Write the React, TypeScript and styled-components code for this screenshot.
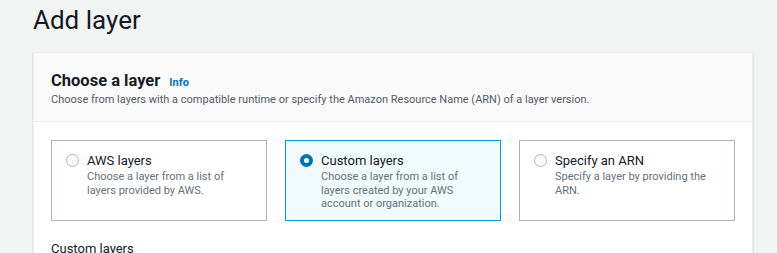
import React, { useState } from 'react'
import styled, { createGlobalStyle } from 'styled-components'

const GlobalStyle = createGlobalStyle`
  html, body {
    margin: 0;
    padding: 0;
    background: #f2f3f3;
    font-family: Roboto, "Liberation Sans", sans-serif;
    color: #16191f;
  }
`

type Option = {
  id: string
  title: string
  description: string
}

const options: Option[] = [
  {
    id: 'aws',
    title: 'AWS layers',
    description: 'Choose a layer from a list of layers provided by AWS.'
  },
  {
    id: 'custom',
    title: 'Custom layers',
    description: 'Choose a layer from a list of layers created by your AWS account or organization.'
  },
  {
    id: 'arn',
    title: 'Specify an ARN',
    description: 'Specify a layer by providing the ARN.'
  }
]

const App: React.FC = () => {
  const [selected, setSelected] = useState('custom')

  return (
    <Page>
      <GlobalStyle />
      <PageTitle>Add layer</PageTitle>
      <Panel>
        <PanelHeader>
          <HeaderRow>
            <PanelTitle>Choose a layer</PanelTitle>
            <InfoLink>Info</InfoLink>
          </HeaderRow>
          <HeaderDescription>
            Choose from layers with a compatible runtime or specify the Amazon Resource Name (ARN) of a layer
            version.
          </HeaderDescription>
        </PanelHeader>
        <PanelBody>
          <Tiles>
            {options.map((o) => (
              <Tile key={o.id} $active={selected === o.id} onClick={() => setSelected(o.id)}>
                <Radio $active={selected === o.id} />
                <TileText>
                  <TileTitle>{o.title}</TileTitle>
                  <TileDescription>{o.description}</TileDescription>
                </TileText>
              </Tile>
            ))}
          </Tiles>
          <FieldLabel>Custom layers</FieldLabel>
        </PanelBody>
      </Panel>
    </Page>
  )
}

const Page = styled.div`
  padding: 0 24px 0 33px;
  height: 253px;
  overflow: hidden;
`

const PageTitle = styled.h1`
  margin: 0;
  padding-top: 2px;
  height: 50px;
  font-size: 26px;
  font-weight: 400;
  line-height: 36px;
  color: #16191f;
`

const Panel = styled.div`
  width: 720px;
  box-sizing: border-box;
  background: #fff;
  border: 1px solid #eaeded;
  border-bottom: none;
  box-shadow: 0 1px 1px 0 rgba(0, 28, 36, 0.3);
`

const PanelHeader = styled.div`
  background: #fafafa;
  border-bottom: 1px solid #eaeded;
  padding: 17px 17px 16px;
  height: 69px;
  box-sizing: border-box;
`

const HeaderRow = styled.div`
  display: flex;
  align-items: baseline;
  gap: 9px;
`

const PanelTitle = styled.h2`
  margin: 0;
  font-size: 16.5px;
  font-weight: 700;
  line-height: 22px;
  color: #16191f;
`

const InfoLink = styled.a`
  font-size: 11px;
  font-weight: 700;
  color: #0073bb;
`

const HeaderDescription = styled.p`
  margin: 0;
  font-size: 11px;
  line-height: 16px;
  color: #545b64;
`

const PanelBody = styled.div`
  padding: 18px 17px 0;
`

const Tiles = styled.div`
  display: grid;
  grid-template-columns: repeat(3, 216px);
  gap: 18px;
`

const Tile = styled.div<{ $active: boolean }>`
  display: flex;
  gap: 8px;
  height: 81px;
  box-sizing: border-box;
  padding: 11px 14px;
  border: 1px solid ${(p) => (p.$active ? '#00a1c9' : '#aab7b8')};
  background: ${(p) => (p.$active ? '#f1faff' : '#fff')};
  cursor: pointer;
`

const Radio = styled.span<{ $active: boolean }>`
  flex: none;
  width: 13px;
  height: 13px;
  margin-top: 2px;
  box-sizing: border-box;
  border-radius: 50%;
  border: ${(p) => (p.$active ? '4px solid #0073bb' : '1px solid #aab7b8')};
  background: #fff;
`

const TileText = styled.div`
  display: flex;
  flex-direction: column;
`

const TileTitle = styled.div`
  font-size: 13px;
  line-height: 18px;
  color: #16191f;
`

const TileDescription = styled.div`
  font-size: 11px;
  line-height: 13.5px;
  color: #687078;
`

const FieldLabel = styled.div`
  margin-top: 19px;
  font-size: 13px;
  line-height: 18px;
  color: #16191f;
`

export default App
